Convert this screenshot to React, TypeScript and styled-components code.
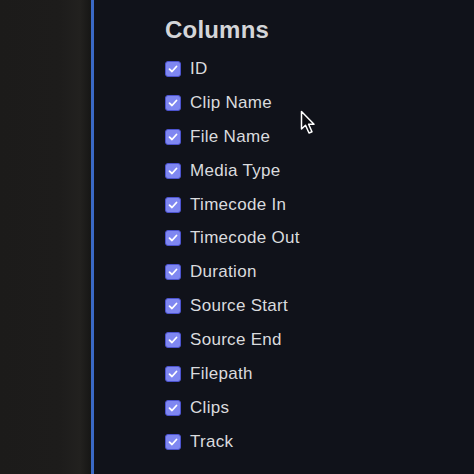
import React from 'react';
import styled, { createGlobalStyle } from 'styled-components';

const GlobalStyle = createGlobalStyle`
  html, body {
    margin: 0;
    padding: 0;
    background: #11131b;
  }
  body {
    font-family: "Liberation Sans", Arial, sans-serif;
  }
`;

const columns = [
  'ID',
  'Clip Name',
  'File Name',
  'Media Type',
  'Timecode In',
  'Timecode Out',
  'Duration',
  'Source Start',
  'Source End',
  'Filepath',
  'Clips',
  'Track',
];

const Shell = styled.div`
  display: flex;
  width: 474px;
  height: 474px;
  overflow: hidden;
  position: relative;
`;

const SidePane = styled.div`
  width: 91px;
  flex-shrink: 0;
  background: linear-gradient(90deg, #1c1b1a 0%, #1d1c1b 65%, #22211f 88%, #161615 100%);
`;

const Divider = styled.div`
  width: 3px;
  flex-shrink: 0;
  background: #3a69c6;
  box-shadow: 1px 0 0 #1b2a4a;
`;

const Panel = styled.div`
  flex: 1;
  background: #10121a;
  padding: 15px 0 0 71px;
`;

const Heading = styled.h2`
  margin: 0 0 7px 0;
  font-size: 24px;
  line-height: 30px;
  font-weight: 700;
  color: #d4d5d8;
  letter-spacing: 0.2px;
`;

const List = styled.ul`
  list-style: none;
  margin: 0;
  padding: 0;
`;

const Row = styled.li`
  display: flex;
  align-items: center;
  gap: 9px;
  height: 33.9px;
`;

const Box = styled.span`
  width: 14px;
  height: 14px;
  border-radius: 3px;
  background: #7f87f1;
  border: 1px solid #4c53cf;
  display: flex;
  align-items: center;
  justify-content: center;
  flex-shrink: 0;
`;

const Label = styled.span`
  font-size: 17px;
  color: #dadbde;
  letter-spacing: 0.3px;
`;

const Pointer = styled.svg`
  position: absolute;
  left: 300px;
  top: 110px;
`;

const Check = () => (
  <svg width="10" height="8" viewBox="0 0 10 8">
    <path d="M1.5 4.2 L4 6.5 L8.5 1.5" fill="none" stroke="#ffffff" strokeWidth="1.8" strokeLinecap="round" strokeLinejoin="round" />
  </svg>
);

export default function App() {
  return (
    <>
      <GlobalStyle />
      <Shell>
        <SidePane />
        <Divider />
        <Panel>
          <Heading>Columns</Heading>
          <List>
            {columns.map((c) => (
              <Row key={c}>
                <Box>
                  <Check />
                </Box>
                <Label>{c}</Label>
              </Row>
            ))}
          </List>
        </Panel>
        <Pointer width="20" height="26" viewBox="0 0 20 26">
          <path d="M1.5 1.5 L1.5 19 L5.5 15.2 L9 23 L12 21.7 L8.6 14.2 L14 14.2 Z" fill="#0c0d12" stroke="#ffffff" strokeWidth="1.5" strokeLinejoin="round" />
        </Pointer>
      </Shell>
    </>
  );
}
